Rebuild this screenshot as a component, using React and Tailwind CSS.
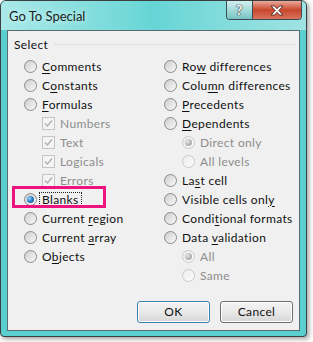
import React from 'react';

const font = "font-['Lato','Noto_Sans',sans-serif]";

const Radio = ({ checked, disabled }) => (
  <span
    className={
      disabled
        ? 'w-[13px] h-[13px] shrink-0 rounded-full border border-[#c9c9c9] bg-gradient-to-br from-[#ececec] to-[#fbfbfb] flex items-center justify-center'
        : 'w-[13px] h-[13px] shrink-0 rounded-full border border-[#8b8c8c] bg-gradient-to-br from-[#cdcdcd] to-[#fafafa] flex items-center justify-center'
    }
  >
    {checked && !disabled && (
      <span className="w-[7px] h-[7px] rounded-full bg-[radial-gradient(circle_at_35%_35%,#9fd6ff_0%,#2a86cc_45%,#0c3e6e_100%)]" />
    )}
    {checked && disabled && (
      <span className="w-[7px] h-[7px] rounded-full bg-[radial-gradient(circle_at_35%_35%,#e8e8e8_0%,#b4b4b4_55%,#9a9a9a_100%)]" />
    )}
  </span>
);

const Check = () => (
  <span className="w-[13px] h-[13px] shrink-0 border border-[#c4c4c4] bg-[#f4f4f4] flex items-center justify-center">
    <svg width="9" height="9" viewBox="0 0 9 9">
      <path d="M1 4.5 L3.4 7 L8 1.5" fill="none" stroke="#b2b2b2" strokeWidth="1.5" />
    </svg>
  </span>
);

// label with one underlined access key
const Label = ({ pre, k, post, disabled }) => (
  <span className={disabled ? 'text-[#8d8d8d] whitespace-nowrap' : 'text-[#111] whitespace-nowrap'}>
    {pre}
    {k && <span className="underline underline-offset-[2px]">{k}</span>}
    {post}
  </span>
);

const Row = ({ children, indent }) => (
  <div className={indent ? 'h-[19px] flex items-center gap-[5px] pl-[18px]' : 'h-[19px] flex items-center gap-[5px]'}>
    {children}
  </div>
);

const Btn = ({ children, focused }) => (
  <button
    className={
      focused
        ? 'w-[73px] h-[22px] rounded-[3px] border border-[#3c7fb1] bg-gradient-to-b from-[#f3f3f3] via-[#e9e9e9] to-[#d6d6d6] shadow-[inset_0_0_0_1px_#fff] text-[12px] text-[#111]'
        : 'w-[73px] h-[22px] rounded-[3px] border border-[#707070] bg-gradient-to-b from-[#f3f3f3] via-[#e9e9e9] to-[#d6d6d6] shadow-[inset_0_0_0_1px_#fff] text-[12px] text-[#111]'
    }
  >
    {children}
  </button>
);

export default function App() {
  return (
    <div className={`w-[313px] h-[342px] bg-[#fbfbfb] ${font} text-[12px] tracking-[0.35px] leading-none overflow-hidden`}>
      <div className="w-[307px] h-[337px] rounded-t-[6px] rounded-b-[4px] border border-[#3b3f40] bg-[#5acfcf] flex flex-col shadow-[2px_2px_4px_rgba(0,0,0,0.35)]">
        {/* title bar */}
        <div className="h-[29px] shrink-0 flex items-start rounded-t-[5px] bg-gradient-to-r from-[#a9e9e9] via-[#66d5d5] to-[#9fe3e3]">
          <div className="pl-[8px] pt-[9px] text-[13px] tracking-normal text-[#1c1c1c] [text-shadow:0_0_6px_#e8ffff]">Go To Special</div>
          <div className="ml-auto mr-[4px] flex h-[19px] border border-t-0 border-[#3a4c50] rounded-b-[4px] overflow-hidden">
            <div className="w-[26px] flex items-center justify-center bg-gradient-to-b from-[#d2f0f0] via-[#a6dada] to-[#76c3c3] border-r border-[#3a4c50]">
              <span className="text-[14px] font-bold text-white [text-shadow:0_0_1px_#333,0_0_1px_#333,0_0_1px_#333]">?</span>
            </div>
            <div className="w-[48px] flex items-center justify-center bg-gradient-to-b from-[#e9a99b] via-[#c8462c] to-[#d9735c]">
              <svg width="14" height="11" viewBox="0 0 14 11">
                <path
                  d="M1 1 H4.5 L7 3.7 L9.5 1 H13 L8.8 5.5 L13 10 H9.5 L7 7.3 L4.5 10 H1 L5.2 5.5 Z"
                  fill="#fff"
                  stroke="#4a2a22"
                  strokeWidth="0.9"
                />
              </svg>
            </div>
          </div>
        </div>

        {/* client area */}
        <div className="mx-[6px] mb-[5px] flex-1 border border-[#5b6c70] bg-[#f0f0f0] flex flex-col">
          <div className="h-[26px] flex items-center pl-[6px] pr-[4px] pt-[1px]">
            <span className="text-[#111]">Select</span>
            <span className="ml-[6px] flex-1 h-px bg-[#d5dfe5]" />
          </div>

          <div className="flex pl-[16px]">
            <div className="w-[140px] flex flex-col">
              <Row><Radio /><Label k="C" post="omments" /></Row>
              <Row><Radio /><Label pre="C" k="o" post="nstants" /></Row>
              <Row><Radio /><Label k="F" post="ormulas" /></Row>
              <Row indent><Check /><Label pre="Numbers" disabled /></Row>
              <Row indent><Check /><Label pre="Text" disabled /></Row>
              <Row indent><Check /><Label pre="Logicals" disabled /></Row>
              <Row indent><Check /><Label pre="Errors" disabled /></Row>
              <div className="relative">
                <Row>
                  <Radio checked />
                  <span className="outline outline-1 outline-dotted outline-[#222] outline-offset-[1px] px-[1px] -ml-[1px]">
                    <Label pre="Blan" k="k" post="s" />
                  </span>
                </Row>
                <span className="absolute -left-[12px] -top-[4px] w-[94px] h-[22px] border-[3px] border-[#ef1380]" />
              </div>
              <Row><Radio /><Label pre="Current " k="r" post="egion" /></Row>
              <Row><Radio /><Label pre="Current " k="a" post="rray" /></Row>
              <Row><Radio /><Label pre="O" k="b" post="jects" /></Row>
            </div>
            <div className="flex flex-col">
              <Row><Radio /><Label pre="Ro" k="w" post=" differences" /></Row>
              <Row><Radio /><Label pre="Colu" k="m" post="n differences" /></Row>
              <Row><Radio /><Label k="P" post="recedents" /></Row>
              <Row><Radio /><Label k="D" post="ependents" /></Row>
              <Row indent><Radio checked disabled /><Label pre="Direct only" disabled /></Row>
              <Row indent><Radio disabled /><Label pre="All levels" disabled /></Row>
              <Row><Radio /><Label pre="La" k="s" post="t cell" /></Row>
              <Row><Radio /><Label pre="Visible cells onl" k="y" /></Row>
              <Row><Radio /><Label pre="Condi" k="t" post="ional formats" /></Row>
              <Row><Radio /><Label pre="Data " k="v" post="alidation" /></Row>
              <Row indent><Radio checked disabled /><Label pre="All" disabled /></Row>
              <Row indent><Radio disabled /><Label pre="Same" disabled /></Row>
            </div>
          </div>

          <div className="mt-auto mb-[7px] mr-[6px] flex justify-end gap-[10px]">
            <Btn focused>OK</Btn>
            <Btn>Cancel</Btn>
          </div>
        </div>
      </div>
    </div>
  );
}
